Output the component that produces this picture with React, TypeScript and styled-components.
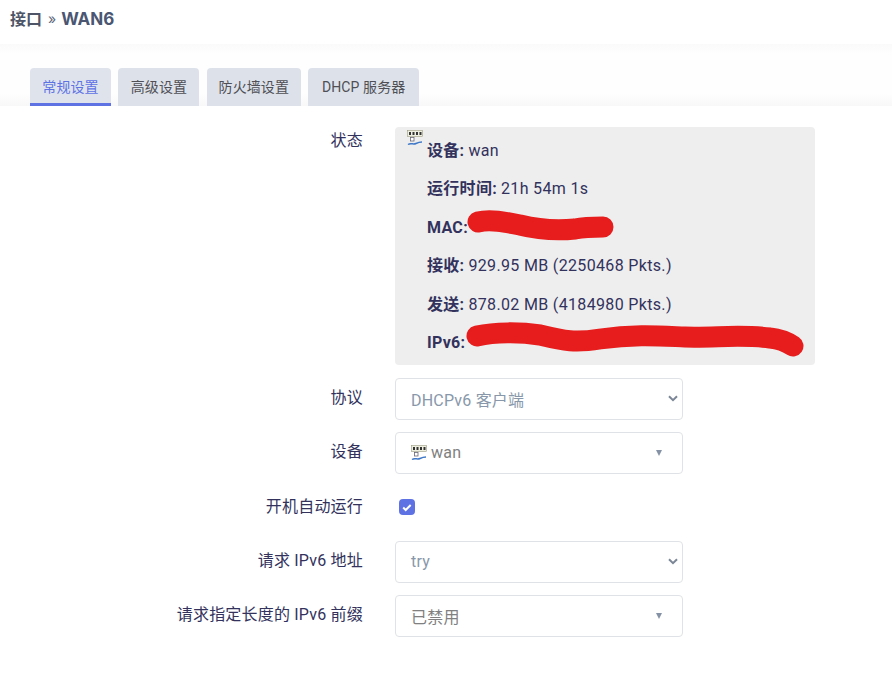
import React from "react";
import styled, { createGlobalStyle } from "styled-components";

const Global = createGlobalStyle`
  html, body { margin: 0; padding: 0; background: #fff; }
  body { font-family: "Roboto", "Noto Sans CJK SC", "Noto Sans", sans-serif; }
`;
const Page = styled.div`
  width: 892px; height: 689px; overflow: hidden; background: #fff; display: flex; flex-direction: column;
`;
const Header = styled.header`
  height: 44px; padding-left: 10px; box-sizing: border-box; display: flex; align-items: flex-start;
  font-family: "Inter", "Noto Sans CJK SC", sans-serif;
  font-size: 17px; line-height: 38px; font-weight: 700; color: #4a5672; background: #fff;
`;
const Crumb = styled.span`
  font-size: 16px; color: #4d5566;
`;
const Sep = styled.span`
  font-weight: 400; font-size: 14px; margin: 0 5px 0 6px; color: #5a6478;
`;
const TabBar = styled.nav`
  height: 62px; box-sizing: border-box; padding: 24px 0 0 30px; display: flex; gap: 7.4px; align-items: flex-end;
  background: linear-gradient(#fafafa 0, #fefefe 10px, #fefefe 50px, #f8f8f8 100%);
`;
const Tab = styled.div<{ $active?: boolean; $w: number }>`
  width: ${p => p.$w}px; height: 38px; box-sizing: border-box; border-radius: 4px 4px 0 0;
  display: flex; align-items: center; justify-content: center; font-size: 14px; letter-spacing: 0.1px;
  background: ${p => (p.$active ? "#dfe3ec" : "#dde2ea")};
  color: ${p => (p.$active ? "#5e72e4" : "#4f4f55")};
  border-bottom: 3px solid ${p => (p.$active ? "#5e72e4" : "transparent")};
`;
const Form = styled.main`
  display: flex; flex-direction: column; padding-top: 21px;
`;
const Row = styled.div<{ $gap: number }>`
  display: grid; grid-template-columns: 363px 1fr; column-gap: 32px; margin-bottom: ${p => p.$gap}px;
`;
const Label = styled.div<{ $h?: number }>`
  text-align: right; font-size: 16px; letter-spacing: 0.2px; color: #32325d; line-height: ${p => p.$h ?? 40}px;
`;
const Status = styled.div`
  position: relative; width: 420px; height: 238px; box-sizing: border-box; background: #eeeeee;
  border-radius: 4px; padding: 5px 0 0 32px; display: flex; flex-direction: column;
  color: #32325d; font-size: 16px;
`;
const StatusLine = styled.div`
  height: 38.4px; line-height: 38.4px; white-space: nowrap;
  strong { font-weight: 700; letter-spacing: 0.3px; }
`;
const Value = styled.span`
  letter-spacing: 0.34px;
`;
const IconSlot = styled.span`
  position: absolute; left: 12px; top: 3px; display: block; line-height: 0;
`;
const Scribble = styled.svg`
  position: absolute; left: 0; top: 0; pointer-events: none;
`;
const Field = styled.div<{ $pad?: number }>`
  width: 288px; height: 42px; box-sizing: border-box; border: 1px solid #dfe2e6; border-radius: 4px; background: #fff;
  display: flex; align-items: center; justify-content: space-between; font-size: 16px; letter-spacing: 0.2px;
  padding: 0 ${p => p.$pad ?? 16}px 1px 15px;
`;
const Muted = styled.span`
  color: #8898aa;
`;
const Grey = styled.span`
  color: #808080; display: flex; align-items: center; gap: 4px;
`;
const Caret = styled.span`
  width: 0; height: 0; border-left: 3.5px solid transparent; border-right: 3.5px solid transparent; border-top: 6px solid #8592a6; margin-right: 4px;
`;
const ChevronIcon = styled.svg`
  margin-right: -1px; display: block;
`;
const CheckBox = styled.span`
  width: 16px; height: 16px; margin-left: 4px; border-radius: 4px; background: #5e72e4; display: flex; align-items: center; justify-content: center;
`;
const CheckWrap = styled.div`
  height: 40px; display: flex; align-items: center;
`;

const NetIcon = () => (
  <svg width="16" height="16" viewBox="0 0 16 16">
    <rect x="0.5" y="0.5" width="15" height="6" fill="#efefe0" stroke="#9a9a80" strokeWidth="0.6" />
    <rect x="2" y="2" width="2" height="3" fill="#333" />
    <rect x="5.5" y="2" width="2" height="3" fill="#333" />
    <rect x="9" y="2" width="2" height="3" fill="#333" />
    <rect x="12.5" y="2" width="2" height="3" fill="#333" />
    <rect x="3.5" y="7.5" width="3.500" height="3.500" fill="#fff" stroke="#667" strokeWidth="0.8" />
    <path d="M1 14.500c3-2 5 .5 8-1 2-1 4-1.500 6-1.500" stroke="#3f78c8" strokeWidth="1.500" fill="none" />
  </svg>
);

const Chevron = () => (
  <ChevronIcon width="10" height="7" viewBox="0 0 10 7">
    <path d="M1 1.200l4 4 4-4" fill="none" stroke="#7b8796" strokeWidth="2" />
  </ChevronIcon>
);

export default function App() {
  return (
    <Page>
      <Global />
      <Header><Crumb>接口</Crumb><Sep>»</Sep>WAN6</Header>
      <TabBar>
        <Tab $active $w={81}>常规设置</Tab>
        <Tab $w={81}>高级设置</Tab>
        <Tab $w={94}>防火墙设置</Tab>
        <Tab $w={111}>DHCP 服务器</Tab>
      </TabBar>
      <Form>
        <Row $gap={13}>
          <Label $h={28}>状态</Label>
          <Status>
            <IconSlot><NetIcon /></IconSlot>
            <StatusLine><strong>设备:</strong> <Value>wan</Value></StatusLine>
            <StatusLine><strong>运行时间:</strong> <Value>21h 54m 1s</Value></StatusLine>
            <StatusLine><strong>MAC:</strong></StatusLine>
            <StatusLine><strong>接收:</strong> <Value>929.95 MB (2250468 Pkts.)</Value></StatusLine>
            <StatusLine><strong>发送:</strong> <Value>878.02 MB (4184980 Pkts.)</Value></StatusLine>
            <StatusLine><strong>IPv6:</strong></StatusLine>
            <Scribble width="420" height="238" viewBox="0 0 420 238">
              <path d="M83 95C95 92 110 95 125 98C145 103 160 104 180 102C190 100 200 100 208 100" fill="none" stroke="#e71d1d" strokeWidth="21" strokeLinecap="round" strokeLinejoin="round" />
              <path d="M82 209C100 205 125 205 145 208C170 214 180 216 205 212C240 207 265 209 290 210C320 211 345 207 375 211C385 212 392 215 398 219" fill="none" stroke="#e71d1d" strokeWidth="21" strokeLinecap="round" strokeLinejoin="round" />
            </Scribble>
          </Status>
        </Row>
        <Row $gap={12}>
          <Label>协议</Label>
          <Field $pad={5}><Muted>DHCPv6 客户端</Muted><Chevron /></Field>
        </Row>
        <Row $gap={13}>
          <Label>设备</Label>
          <Field><Grey><NetIcon />wan</Grey><Caret /></Field>
        </Row>
        <Row $gap={14}>
          <Label>开机自动运行</Label>
          <CheckWrap>
            <CheckBox>
              <svg width="10" height="9" viewBox="0 0 10 9"><path d="M1.200 4.500l2.500 2.500 5-5" fill="none" stroke="#fff" strokeWidth="2" /></svg>
            </CheckBox>
          </CheckWrap>
        </Row>
        <Row $gap={12}>
          <Label>请求 IPv6 地址</Label>
          <Field $pad={5}><Muted>try</Muted><Chevron /></Field>
        </Row>
        <Row $gap={0}>
          <Label>请求指定长度的 IPv6 前缀</Label>
          <Field><Grey>已禁用</Grey><Caret /></Field>
        </Row>
      </Form>
    </Page>
  );
}
